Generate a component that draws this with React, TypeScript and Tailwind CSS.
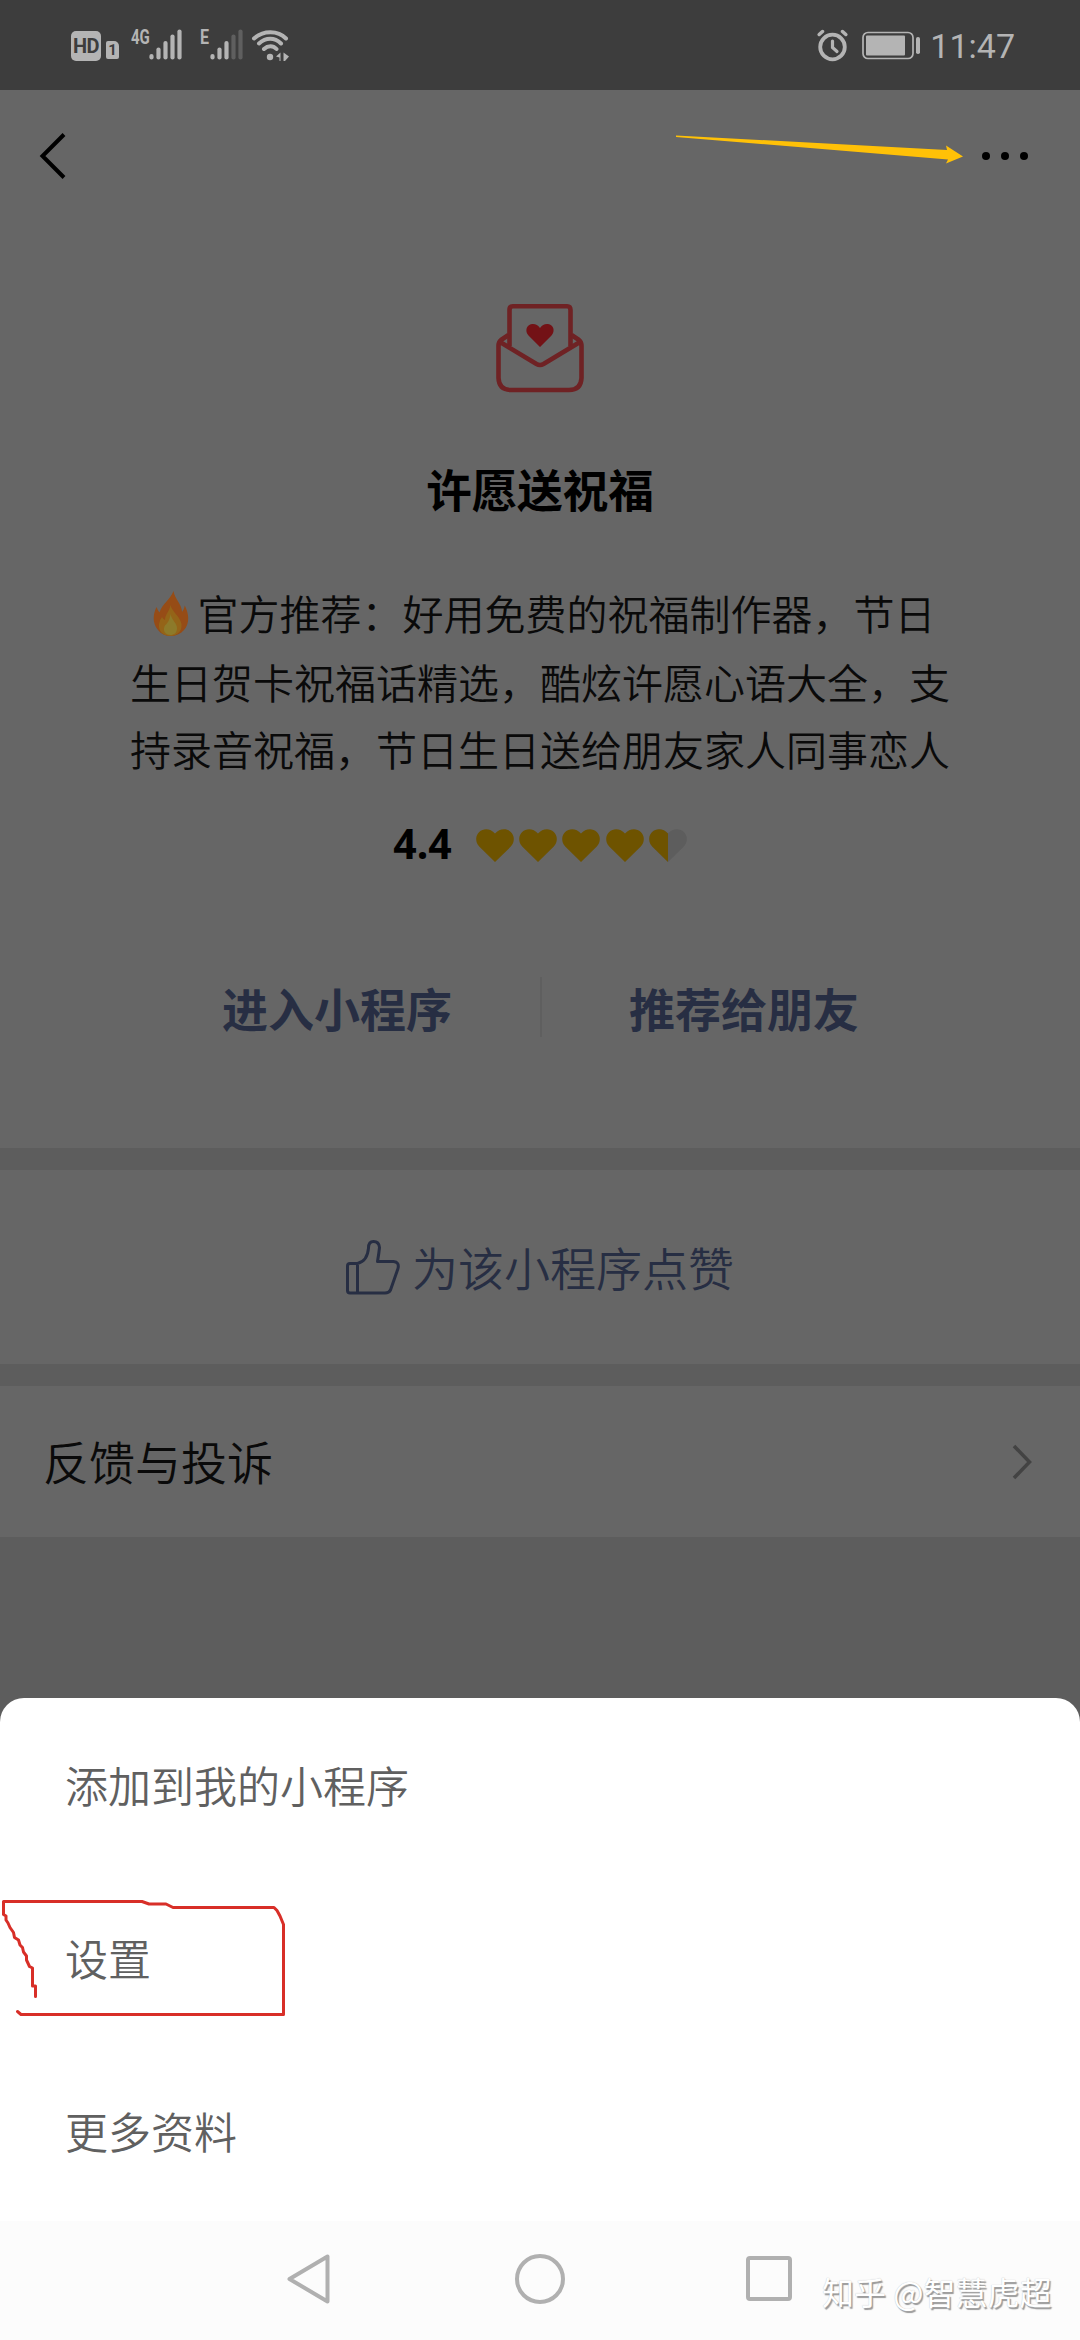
import { ReactNode } from 'react';

const HEART = 'M19 33 L3.2 17.6 C-1 13 -0.6 6.4 3.2 2.9 C7.6 -1 14.6 -0.6 19 4.6 C23.4 -0.6 30.4 -1 34.8 2.9 C38.6 6.4 39 13 34.8 17.6 Z';
const HALF_HEART = 'M19 33 L3.2 17.6 C-1 13 -0.6 6.4 3.2 2.9 C7.6 -1 14.6 -0.6 19 4.6 Z';

const MENU_ITEMS = ['添加到我的小程序', '设置', '更多资料'];

const SignalBars = ({ active }: { active: number }) => (
  <svg width="34" height="32" viewBox="0 0 34 32" strokeWidth="4.2" strokeLinecap="round">
    {[27, 20.5, 14, 7.5, 2.5].map((top, i) => (
      <path key={i} d={`M${2.5 + i * 7} ${top}V28.5`} stroke={i < active ? '#b4b4b4' : '#5f5f5f'} />
    ))}
  </svg>
);

const StatusBar = () => (
  <div className="flex h-[90px] items-start bg-[#3d3d3d] pt-[29px] pl-[71px] pr-[65px] text-[#b4b4b4]">
    <div className="mt-[2px] flex h-[30px] w-[30px] items-center justify-center rounded-[5px] bg-[#b4b4b4] font-['Roboto',sans-serif] text-[20px] font-bold tracking-[-0.5px] text-[#3d3d3d]">
      HD
    </div>
    <div className="mt-[12px] ml-[5px] flex h-[18px] w-[13px] items-center justify-center rounded-[2px] rounded-tr-[5px] bg-[#b4b4b4] font-['Roboto',sans-serif] text-[15px] font-bold text-[#3d3d3d]">
      1
    </div>
    <span className="ml-[12px] w-[18px] origin-left scale-x-[0.75] font-['Roboto',sans-serif] text-[20px] leading-[16px] font-bold">4G</span>
    <SignalBars active={5} />
    <span className="ml-[17px] w-[10px] origin-left scale-x-[0.8] font-['Roboto',sans-serif] text-[20px] leading-[16px] font-bold">E</span>
    <SignalBars active={3} />
    <svg className="ml-[7px]" width="40" height="33" viewBox="0 0 40 33" fill="none" stroke="#b4b4b4" strokeWidth="4" strokeLinecap="round">
      <path d="M3 9.5C12 1.2 27 1.2 35 9.5M8 14.5C15 8.2 23.5 8.2 30 14.5M13 20C17 16.2 22 16.2 25.5 20" />
      <circle cx="19" cy="28" r="3.2" fill="#b4b4b4" stroke="none" />
      <path d="M29.5 23.5V32H28.5V28.5L25 27.5ZM32.5 23.500L38 27.5L34 32H32.5Z" fill="#b4b4b4" stroke="none" />
    </svg>

    <svg className="ml-auto" width="31" height="33" viewBox="0 0 31 33" fill="none" stroke="#b4b4b4" strokeWidth="3.8" strokeLinecap="round">
      <circle cx="15.5" cy="18" r="12.3" />
      <path d="M15.5 12V18.5L20 22.5" strokeWidth="3.2" />
      <path d="M2.2 5.5L5.5 2.5M28.8 5.5L25.5 2.5" strokeWidth="3.5" />
    </svg>
    <svg className="mt-[2px] ml-[14px]" width="59" height="29" viewBox="0 0 59 29">
      <rect x="1" y="1.5" width="50" height="26" rx="5" fill="none" stroke="#b4b4b4" strokeWidth="1.7" />
      <rect x="4" y="4.5" width="39" height="20" rx="1" fill="#b4b4b4" />
      <rect x="54" y="6" width="4" height="17" rx="1.8" fill="#b4b4b4" />
    </svg>
    <span className="ml-[9px] font-['Roboto',sans-serif] text-[34px] leading-[35px]">11:47</span>
  </div>
);

const EnvelopeLogo = () => (
  <svg width="88" height="90" viewBox="0 0 88 90" fill="none" stroke="#6f2224" strokeWidth="4.6" strokeLinejoin="round">
    <path d="M13.5 42V6Q13.5 2.3 17 2.3H71Q74.5 2.3 74.5 6V42" />
    <path d="M12.5 31L5 36Q2.5 38 2.5 42V74Q3 86 15 86H73Q85 86 85.5 74V42Q85.5 38 83 36L75.5 31" />
    <path d="M4 38L40.5 60Q44 62 47.5 60L84 38" />
    <path d="M44 43L32.5 31.5C28.5 27 30.5 20.5 36 20Q41 19.5 44 24Q47 19.5 52 20C57.5 20.5 59.5 27 55.5 31.5Z" fill="#731216" stroke="none" />
  </svg>
);

const Flame = () => (
  <svg className="mr-[9px] ml-[8px] inline-block align-[-7px]" width="36" height="46" viewBox="0 0 36 46">
    <path d="M20.5 0C21.5 8 29 13 29 21Q31 19 31.8 14.5C36 23 37 32 31 39C24 47 11 47 5 39C-1 32 0 23 3.5 16Q4.500 19 6.5 21.5C9 13 17 9 20.5 0Z" fill="#964c16" />
    <path d="M17.5 14C19 21 27 25 28.5 33C29.5 41 23 45 17.5 45C10 45 5 40 6 33Q6.5 29 9 26Q10 28 12 29C12 23 17 20 17.5 14Z" fill="#946418" />
    <path d="M17.5 23C18.5 29 24 32 24 37C24 42 21 44 17.5 44C13 44 10.5 41 11 37Q11.5 34 13.5 33C16 30 17 27 17.5 23Z" fill="#8d7a2a" />
  </svg>
);

const Rating = () => (
  <div className="mt-[33px] flex h-[60px] items-center justify-center">
    <span className="mr-[24px] pb-[3px] font-['Noto_Sans',sans-serif] text-[41px] leading-[57px] font-bold text-black">4.4</span>
    <div className="flex items-center gap-[5.3px]">
      {[1, 1, 1, 1, 0.5].map((fill, i) => (
        <svg key={i} width="38" height="33" viewBox="0 0 38 33">
          <path d={HEART} fill={fill === 1 ? '#6e5300' : '#5d5d5d'} />
          {fill < 1 && <path d={HALF_HEART} fill="#6e5300" />}
        </svg>
      ))}
    </div>
  </div>
);

const LinkButton = ({ children }: { children: ReactNode }) => (
  <button className="w-[405px] text-center text-[46px] leading-[60px] font-bold text-[#272e43]">{children}</button>
);

const App = () => {
  return (
    <div className="relative flex h-[2340px] w-[1080px] flex-col overflow-hidden bg-[#5d5d5d] font-['Noto_Sans_CJK_SC',sans-serif]">
      <StatusBar />

      {/* Profile */}
      <section className="h-[1058px] bg-[#666666]">
        <header className="flex h-[132px] items-center justify-between pr-[52px] pl-[38px]">
          <svg width="30" height="46" viewBox="0 0 30 46" fill="none" stroke="#000" strokeWidth="4">
            <path d="M26 1.5L4.5 23L26 44.5" />
          </svg>
          <div className="flex gap-[10.5px]">
            <span className="h-[8.5px] w-[8.5px] rounded-full bg-black"></span>
            <span className="h-[8.5px] w-[8.5px] rounded-full bg-black"></span>
            <span className="h-[8.5px] w-[8.5px] rounded-full bg-black"></span>
          </div>
        </header>

        <div className="flex flex-col items-center pt-[82px]">
          <EnvelopeLogo />
          <h1 className="mt-[62px] text-[45.5px] leading-[64px] font-bold text-black">许愿送祝福</h1>
          <div className="mt-[58px] text-center text-[41px] leading-[67px] font-[350] whitespace-nowrap text-[#0a0a0a]">
            <p className="mb-[2px] leading-[68px]"><Flame />官方推荐：好用免费的祝福制作器，节日</p>
            <p>生日贺卡祝福话精选，酷炫许愿心语大全，支</p>
            <p>持录音祝福，节日生日送给朋友家人同事恋人</p>
          </div>
        </div>

        <Rating />

        <div className="mt-[102px] flex items-center justify-center pl-[1px]">
          <LinkButton>进入小程序</LinkButton>
          <span className="h-[60px] w-[2px] bg-[#5f5f5f]"></span>
          <LinkButton>推荐给朋友</LinkButton>
        </div>
      </section>

      {/* Like */}
      <section className="mt-[22px] flex h-[194px] items-center justify-center bg-[#666666] text-[#272e43]">
        <svg className="mr-[12px]" width="54" height="55" viewBox="0 0 54 55" fill="none" stroke="currentColor" strokeWidth="3" strokeLinejoin="round">
          <path d="M11.5 23.5H4Q1.5 23.5 1.5 26V50.5Q1.5 53 4 53H39Q43 53 44.5 50L52 28.5Q53.5 22 47.5 21.5H31.5Q33 13 33.5 7.5Q33 1.5 27.5 1.5Q22.5 1.5 22.5 8Q21.5 21 11.5 23.5V53" />
        </svg>
        <span className="pb-[3px] text-[46px] leading-[60px] font-[350]">为该小程序点赞</span>
      </section>

      {/* Feedback */}
      <section className="mt-[22px] flex h-[151px] items-center justify-between bg-[#666666] pr-[48px] pl-[43px]">
        <span className="pb-[3px] text-[46px] leading-[60px] font-[350] text-[#0a0a0a]">反馈与投诉</span>
        <svg width="20" height="36" viewBox="0 0 20 36" fill="none" stroke="#434343" strokeWidth="3.5">
          <path d="M2 2L17.5 18L2 34" />
        </svg>
      </section>

      {/* Action sheet */}
      <section className="mt-auto h-[523px] rounded-t-[24px] bg-white">
        {MENU_ITEMS.map((item) => (
          <div key={item} className="flex h-[173px] items-center pl-[65px] text-[43px] font-[350] text-[#606060]">
            {item}
          </div>
        ))}
      </section>

      {/* System navigation */}
      <nav className="flex h-[119px] items-start bg-[#fcfcfc] pt-[33px] pl-[287px]">
        <svg width="44" height="50" viewBox="0 0 44 50" fill="none" stroke="#b0b0b0" strokeWidth="4" strokeLinejoin="round">
          <path d="M2.5 25L40.5 2.5V47.5Z" />
        </svg>
        <span className="ml-[184px] h-[50px] w-[50px] rounded-full border-[4px] border-[#b0b0b0]"></span>
        <span className="mt-[2px] ml-[181px] h-[45px] w-[46px] rounded-[4px] border-[4.5px] border-[#b0b0b0]"></span>
        <span className="mt-[15px] ml-[30px] text-[32px] leading-[44px] whitespace-nowrap text-white [text-shadow:1.5px_1.5px_1px_#999,0_0_1px_#bbb]">
          知乎 @智慧虎超
        </span>
      </nav>

      {/* Hand-drawn annotations */}
      <svg className="absolute top-[130px] left-[670px]" width="300" height="40" viewBox="0 0 300 40">
        <path d="M6 5.5L277 20L276 15.5L293 26.5L276 33.5L278 29.5L6 7Z" fill="#ffc107" />
      </svg>
      <svg className="absolute top-[1890px] left-0" width="300" height="135" viewBox="0 0 300 135" fill="none" stroke="#d82f28" strokeWidth="3" strokeLinecap="round" strokeLinejoin="round">
        <path d="M35.5 106.5V96H32.5V78L29.5 76.5L26.5 70V66L23.5 62L22.5 57.5L20 55L18.5 50L14.5 47.5L13.5 42.5L10 37.5L8 33L6 30V26L3.5 24.5V11.5H142L149 14H166L173 17.5H274L277 20.5L280 26L283.5 34.5V124.5H21L17.5 121.5" />
      </svg>
    </div>
  );
};

export default App;
